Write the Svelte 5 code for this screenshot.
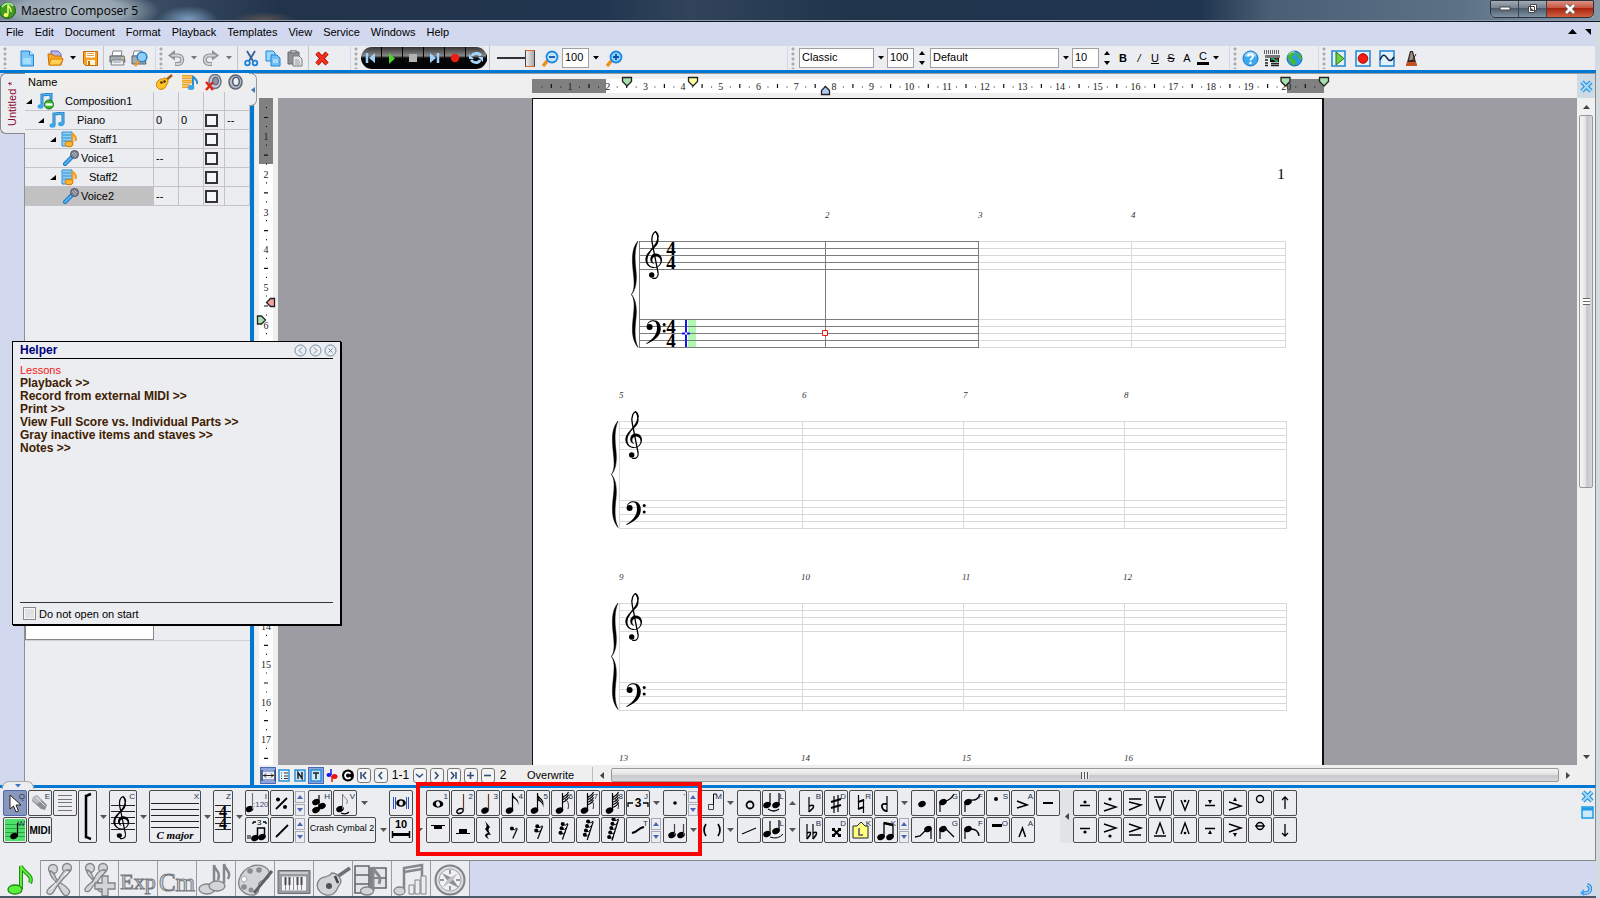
<script>
  const menus = ['File', 'Edit', 'Document', 'Format', 'Playback', 'Templates', 'View', 'Service', 'Windows', 'Help'];

  const rows = [
    { name: 'Composition1', depth: 0, icon: 'comp', open: true, a: '', b: '', box: false, d: '' },
    { name: 'Piano', depth: 1, icon: 'inst', open: true, a: '0', b: '0', box: true, d: '--' },
    { name: 'Staff1', depth: 2, icon: 'staff', open: true, a: '', b: '', box: true, d: '' },
    { name: 'Voice1', depth: 3, icon: 'mic', open: false, a: '--', b: '', box: true, d: '' },
    { name: 'Staff2', depth: 2, icon: 'staff', open: true, a: '', b: '', box: true, d: '' },
    { name: 'Voice2', depth: 3, icon: 'mic', open: false, a: '--', b: '', box: true, d: '', sel: true }
  ];

  const lessons = ['Playback >>', 'Record from external MIDI >>', 'Print >>', 'View Full Score vs. Individual Parts >>', 'Gray inactive items and staves >>', 'Notes >>'];

  let rulerHeight = $state(667);

  const noteBlue = '<path d="M5 13V2l9-1v11" fill="none" stroke="#1f7fc4" stroke-width="3"/><path d="M5 13V2l9-1v11" fill="none" stroke="#5cc0f5" stroke-width="1"/><ellipse cx="3.5" cy="13.5" rx="3" ry="2.2" fill="#3da4e6"/><ellipse cx="12" cy="12" rx="3" ry="2.2" fill="#3da4e6"/>';
  const small = {
    comp: noteBlue + '<circle cx="12" cy="11.500" r="4.500" fill="#3cb42c" stroke="#1d6e12"/><path d="M8.500 11.500h7" stroke="#f0fff0" stroke-width="2.500"/>',
    inst: noteBlue,
    staff: '<path d="M1 1h10v14H1z" fill="#8fd0f8" stroke="#2b8ed0"/><path d="M2 4h8M2 7h8M2 10h8" stroke="#2b8ed0"/><path d="M11.500 12V2c1 3 5 3 3 8" fill="none" stroke="#f39a1c" stroke-width="2"/><ellipse cx="8" cy="13" rx="4" ry="2.800" fill="#ffb52e" stroke="#d77b07"/>',
    mic: '<path d="M2 14l7-7" stroke="#1c72c0" stroke-width="4" stroke-linecap="round"/><path d="M2 14l7-7" stroke="#54b8f6" stroke-width="2" stroke-linecap="round"/><circle cx="11.500" cy="4.500" r="4" fill="#7d8494" stroke="#4d5362"/><path d="M9 3l4 4M11 2l3 3" stroke="#b8bdc8" stroke-width="1"/>',
    guitar: '<path d="M8 8L16 1" stroke="#9a5a18" stroke-width="2.500"/><path d="M2 7c2-3 5-1 6-3 4 0 5 4 3 6-1 1-1 4-4 5-5 2-9-4-5-8z" fill="#ffc322" stroke="#c97c08"/><circle cx="5.500" cy="8.500" r="1.300" fill="#4a2b05"/><circle cx="8.500" cy="7.500" r="1.300" fill="#4a2b05"/>',
    sheet: '<path d="M1 3h11M1 7.500h11M1 12h8" stroke="#d98a0c" stroke-width="3.500"/><path d="M1 3h11M1 7.500h11M1 12h8" stroke="#ffc24a" stroke-width="2"/><path d="M12 13V2c1 3 5 3 4 8" fill="none" stroke="#2b8ed0" stroke-width="2"/><ellipse cx="10" cy="13.500" rx="3.300" ry="2.500" fill="#3da4e6"/>',
    muted: '<ellipse cx="10" cy="7.500" rx="6" ry="7" fill="#c8ccd6" stroke="#6c7488" stroke-width="1.500"/><ellipse cx="10.500" cy="7" rx="3" ry="4" fill="#8b92a3" stroke="#525a6c"/><path d="M1 8l7 8M8 8l-7 8" stroke="#e02618" stroke-width="2.500"/>',
    speaker: '<ellipse cx="8.500" cy="8" rx="6.500" ry="7" fill="#b4bac8" stroke="#5c647a" stroke-width="1.500"/><ellipse cx="9" cy="7.500" rx="3.300" ry="4.300" fill="#eceef2" stroke="#525a6c" stroke-width="1.500"/>',
    new: '<path d="M2 1h8.500l4 4v11H2z" fill="#7cc6f8" stroke="#1f86d4"/><path d="M10.500 1v4h4" fill="#d8effd" stroke="#1f86d4"/><path d="M4 8h8v6H4z" fill="#a8dcfb"/>',
    open: '<path d="M4 1h7l3 3v7H4z" fill="#b9b4ea" stroke="#6c66b8"/><path d="M1 4h4l2 2h6l3 3-2 6H2z" fill="#fba828" stroke="#c86c06"/><path d="M4 9h12l-3 6H2z" fill="#ffcf55" stroke="#d58208"/>',
    save: '<path d="M1.500 1.500h14v14h-12l-2-2z" fill="#f9a024" stroke="#c76b05"/><path d="M4 2h9v5.500H4z" fill="#fff"/><path d="M5 10h8v5H5z" fill="#fff6df"/><path d="M5 3.500h7M5 5.500h7" stroke="#e0a04a"/><path d="M6 11h2v4H6z" fill="#c76b05"/>',
    print: '<path d="M4 1h9l-1 5H3z" fill="#fff" stroke="#7d8188"/><path d="M1 6h14l1 6H1z" fill="#a6abb2" stroke="#5f646c"/><path d="M3 10h11l1 5H2z" fill="#f0f1f3" stroke="#7d8188"/><path d="M4 12h8" stroke="#8e939a"/><circle cx="14" cy="8" r="1" fill="#f2d44c"/>',
    preview: '<path d="M3 1h8l-1 5H2z" fill="#fff" stroke="#7d8188"/><path d="M1 6h13l1 8H1z" fill="#a6abb2" stroke="#5f646c"/><circle cx="11" cy="7" r="4.800" fill="#8ed0fa" stroke="#2a80c8" stroke-width="1.500"/><path d="M8 11l-4 5" stroke="#f2962a" stroke-width="2.500"/>',
    undo: '<path d="M3 5.500h7a4 4 0 0 1 0 8.500H7" fill="none" stroke="#8e9197" stroke-width="4"/><path d="M7 0L0 5.500l7 5z" fill="#8e9197"/><path d="M3.500 5.500H10a4 4 0 0 1 0 8.500H7.500" fill="none" stroke="#d4d6da" stroke-width="1.800"/>',
    redo: '<path d="M13 5.500H6a4 4 0 0 0 0 8.500h3" fill="none" stroke="#8e9197" stroke-width="4"/><path d="M9 0l7 5.500-7 5z" fill="#8e9197"/><path d="M12.500 5.500H6a4 4 0 0 0 0 8.500h2.500" fill="none" stroke="#d4d6da" stroke-width="1.800"/>',
    cut: '<path d="M4 1l6 10M12 1L6 11" stroke="#3b5f9a" stroke-width="1.800"/><circle cx="4.500" cy="13" r="2.300" fill="none" stroke="#1d82d8" stroke-width="1.800"/><circle cx="12" cy="13" r="2.300" fill="none" stroke="#1d82d8" stroke-width="1.800"/>',
    copy: '<path d="M1 1h7l2 2v8H1z" fill="#9ad6fb" stroke="#1f86d4"/><path d="M6 5h6l3 3v8H6z" fill="#6fc0f6" stroke="#1f86d4"/><path d="M8 10h5M8 12h5" stroke="#e6f5fe"/>',
    paste: '<path d="M1 2h11v12H1z" fill="#8f9094" stroke="#6a6b70"/><path d="M4 0h5v3H4z" fill="#c3c4c8" stroke="#6a6b70"/><path d="M6 6h6l3 3v7H6z" fill="#e3e4e7" stroke="#7a7b80"/><path d="M8 10h4M8 12h5M8 14h5" stroke="#9b9ca1"/>',
    del: '<path d="M3 3l10 11M13 3L3 14" stroke="#a80e04" stroke-width="4.500"/><path d="M3 3l10 11M13 3L3 14" stroke="#f2301c" stroke-width="3"/>',
    zoomout: '<path d="M1 16l5-6" stroke="#ef8e20" stroke-width="3.500"/><circle cx="10" cy="7" r="5.500" fill="#bfe6fd" stroke="#1f86e0" stroke-width="1.800"/><path d="M7 7h6" stroke="#0c50b0" stroke-width="1.800"/>',
    zoomin: '<path d="M1 16l5-6" stroke="#ef8e20" stroke-width="3.500"/><circle cx="10" cy="7" r="5.500" fill="#8fd4fb" stroke="#1f86e0" stroke-width="1.800"/><path d="M7 7h6M10 4v6" stroke="#0c50b0" stroke-width="1.800"/>',
    help: '<circle cx="8.500" cy="8.500" r="7.500" fill="#3ba9f2" stroke="#1673c4"/><path d="M2.500 6.500a6.200 6.200 0 0 1 12 0z" fill="#9dd8fb"/><path d="M6 6.500c0-3 5-3 5 0 0 2-2.500 2-2.500 4" fill="none" stroke="#fff" stroke-width="1.800"/><circle cx="8.500" cy="13" r="1.200" fill="#fff"/>',
    keys: '<path d="M0 1h16M0 3h16" stroke="#333" stroke-width="1.500" stroke-dasharray="1 1"/><path d="M1 5h15v3H1z" fill="#777"/><path d="M6 8h9v4H6z" fill="#111"/><path d="M7 9l3 0 2 2 2 0" stroke="#25c06a" stroke-width="1.500" fill="none"/><path d="M1 10h3M1 13h3M1 15.500h3M7 13.500h8M7 15.500h8" stroke="#222" stroke-width="1.300"/><path d="M12 9h2" stroke="#e33"/>',
    globe: '<circle cx="8.500" cy="8.500" r="7.500" fill="#2a9be8" stroke="#1a64a8"/><path d="M3 3.500c3-3 6-2 6 0s-3 2-3 4 3 1 4 3-1 4-2 5c-3-1-3-4-5-6s-2-4 0-6z" fill="#46b53a"/><path d="M11 2.500c3 1 5 4 5 7-2 0-5-2-5-4z" fill="#46b53a"/><path d="M3 4.500c2-3 5-3 6-2" stroke="#c8f0ff" fill="none"/>',
    wplay: '<path d="M1 1h13v15H1z" fill="#e2f2fd" stroke="#1f86d4" stroke-width="1.500"/><path d="M5 2l8 6.500L5 15z" fill="#6cd040" stroke="#23760d"/>',
    wrec: '<path d="M1 1h14v15H1z" fill="#e2f2fd" stroke="#1f86d4" stroke-width="1.500"/><circle cx="8" cy="8.500" r="4.800" fill="#f21c10" stroke="#a80c04"/>',
    wwave: '<path d="M1 1h14v15H1z" fill="#e2f2fd" stroke="#1f86d4" stroke-width="1.500"/><path d="M1 10c3-7 5-5 7-2s4 4 7-1" fill="none" stroke="#13233c" stroke-width="1.500"/>',
    metro: '<path d="M7 1h3l4 15H3z" fill="#3d2a28"/><path d="M8 2h1l2 8H6z" fill="#9a8f8a"/><path d="M4 12h9l1 4H3z" fill="#c3521e"/><path d="M9 11l4-7" stroke="#222"/>'
  };

  const transport = [
    { n: 'Rewind', d: '<path d="M4 3v10" stroke="#9fd0fb" stroke-width="2.500"/><path d="M12 3v10L6 8z" fill="#9fd0fb"/>' },
    { n: 'Play', d: '<path d="M5 3l6 5.500L5 14z" fill="#4fd02a"/>' },
    { n: 'Stop', d: '<path d="M4 4h8v8H4z" fill="#b3b3b3"/>' },
    { n: 'Forward', d: '<path d="M12 3v10" stroke="#9fd0fb" stroke-width="2.500"/><path d="M4 3v10l6-5z" fill="#9fd0fb"/>' },
    { n: 'Record', d: '<circle cx="8" cy="8" r="4.200" fill="#f01c10"/>' },
    { n: 'Loop', d: '<path d="M13 5.500C10 2 5 3 4 6M3 10c3 4 8 3 9 0" fill="none" stroke="#a6d4fb" stroke-width="2.800"/><path d="M1 4v5h5zM15 12V7h-5z" fill="#a6d4fb"/>' }
  ];

  const head = (x, y) => `<ellipse cx="${x}" cy="${y}" rx="3.900" ry="3" transform="rotate(-25 ${x} ${y})"/>`;
  const stem = (x, y1, y2, c = '#000') => `<path d="M${x} ${y1}V${y2}" stroke="${c}" stroke-width="1.200" fill="none"/>`;
  const flagged = (n) => {
    let s = head(8.5, 20.5) + stem(11.5, 20, 3);
    for (let i = 0; i < n; i++) {
      const y = 3 + i * 2.6;
      s += n < 3
        ? `<path d="M11.5 ${y}c0 5 8 5 5.500 13c1-5-4-8-5.500-8z" />`
        : `<path d="M11.5 ${y + 4}q4-1 6-5" stroke="#000" stroke-width="1.100" fill="none"/>`;
    }
    if (n > 2) s += '<path d="M12 7c3 3 7 5 5 12" stroke="#333" fill="none"/>';
    return s;
  };
  const rest = (n) => {
    const top = 11.5 - (n - 1) * 2.3;
    let s = `<path d="M${16 + n * 0.3} ${top}L${12 - n * 0.2} ${21 + n * 0.5}" stroke="#000" stroke-width="1.200" fill="none"/>`;
    for (let i = 0; i < n; i++) {
      const y = top + i * 4.4;
      const x = 10.5 + n * 0.4 - i * 1.1;
      s += `<circle cx="${x}" cy="${y}" r="2"/><path d="M${x} ${y + 1}q3 1 5-1.500" stroke="#000" fill="none"/>`;
    }
    return s;
  };
  const line = (d, w = 1.3) => `<path d="${d}" fill="none" stroke="#000" stroke-width="${w}"/>`;
  const spot = (x, y, r = 1.6) => `<circle cx="${x}" cy="${y}" r="${r}"/>`;
  const two = head(5, 15) + head(14, 15) + stem(8, 15, 3) + stem(17, 15, 3);

  const g = {
    arrow: '<path d="M7 5v14l3.500-3 2.500 6 2.500-1-2.500-6h5z" fill="#fff" stroke="#222"/>',
    eraser: '<path d="M5 7l4-2 10 10-2 5-4-1L4 11z" fill="#8d8f94"/><path d="M5 7l4-2 5 5-5 4-5-4z" fill="#b9bbc0"/><path d="M8 7l9 9" stroke="#e8e8ea"/>',
    lines: '<path d="M5 5.500h14M5 9.500h14M5 12.500h14M5 16.500h14M5 20.500h14" stroke="#777" fill="none"/>',
    pen: '<path d="M2 2h20v22H2z" fill="#4fe06a"/><path d="M2 7.500h20M2 11.500h20M2 15.500h20M2 19.500h20" stroke="#2aa545"/>' + head(11, 19) + stem(14.5, 19, 6),
    tempo: head(4.5, 19) + stem(7.5, 19, 3, '#777') + '<text x="8" y="17" font-size="8" fill="#3a4a70">:120</text>',
    swing: line('M8 5h3M18 5h3M8 5v2M21 5v2') + '<text x="12" y="8" font-size="8">3</text>' + head(10, 21) + head(17, 20) + line('M12.500 21V11h7v9', 1.5) + line('M2 19h4M2 21h4', 1),
    repeat: line('M6 19L17 8', 1.8) + spot(8, 9.5, 2) + spot(15, 17, 2),
    slash: line('M6 20L18 8', 1.8),
    chord: head(8, 12) + head(14, 16) + head(8, 20) + stem(11, 20, 5),
    grace: head(7, 19) + '<path d="M9.500 19V4c1 4 7 5 4 10" fill="none" stroke="#777"/>' + line('M8 23q5 2 8-1'),
    breve: '<path d="M4.500 7v12M6.500 7v12M17.500 7v12M19.500 7v12" stroke="#2b50c8" fill="none"/><ellipse cx="12" cy="13" rx="4.800" ry="3.800"/><ellipse cx="12" cy="13" rx="2" ry="2.500" fill="#ebedf1"/>',
    ten: '<text x="12" y="11" font-size="11" font-weight="bold" text-anchor="middle">10</text><path d="M3.500 14v7M20.500 14v7" stroke="#000" stroke-width="1.500" fill="none"/><path d="M3 16h18v3H3z"/>',
    whole: '<ellipse cx="12" cy="14" rx="5.300" ry="3.700"/><ellipse cx="12" cy="14" rx="2" ry="2.700" fill="#ebedf1" transform="rotate(-20 12 14)"/>',
    half: '<ellipse cx="9" cy="21" rx="3.300" ry="2.200" fill="none" stroke="#000" stroke-width="1.400" transform="rotate(-25 9 21)"/>' + stem(12.5, 20, 4, '#6b3d1e'),
    quarter: head(9, 20.5) + stem(12.5, 20, 4, '#6b3d1e'),
    wrest: line('M5 8.500h14', 1.2) + '<path d="M8 8h8v4H8z"/>',
    hrest: line('M5 16.500h14', 1.2) + '<path d="M8 12h8v4H8z"/>',
    qrest: '<path d="M9 4l5 6c-2 2-2 4 1 8-4-1-5 1-2 4-5-2-5-5-1-6l-3-4c2-2 2-4 0-8z"/>',
    tuplet: line('M2 17v-4h5M17 13h5v4') + '<text x="12" y="17" font-size="12" text-anchor="middle" font-weight="bold">3</text>',
    tie: line('M6 16l3-1 6-4 3-1', 2),
    dot: spot(12, 13, 1.8),
    pair: head(9, 18) + head(18, 18) + stem(11.5, 18, 7, '#444') + stem(20.5, 18, 7, '#444'),
    sq: '<path d="M8.500 14.500h5v5h-5z" fill="none" stroke="#444"/>' + line('M13.500 15V4h3', 1),
    paren: '<path d="M6 7q-4 6 0 12M18 7q4 6 0 12" stroke="#000" stroke-width="1.700" fill="none"/>',
    circle: '<circle cx="13" cy="15" r="3.500" fill="none" stroke="#000" stroke-width="1.800"/>',
    gliss: line('M5 17l14-6', 1.1),
    slurs: two + line('M6 19q6 4 11 0'),
    slurs2: head(5, 17) + head(14, 14) + stem(8, 17, 4) + stem(17, 14, 3) + line('M8 20q8 3 13-3', 1),
    flat: line('M10 7v15', 1.2) + line('M10 16q6-2 4 2l-4 4', 1.6),
    dflat: line('M8 7v15M14 7v15', 1.2) + line('M8 16q5-2 3 2l-3 4M14 16q5-2 3 2l-3 4', 1.6),
    sharp: line('M10 6v17M14 5v17', 1.2) + line('M7 12l10-3M7 18l10-3', 2.2),
    dsharp: line('M9 12l7 7M16 12l-7 7', 2) + '<path d="M8 11h3v3H8zM14 11h3v3h-3zM8 17h3v3H8zM14 17h3v3h-3z"/>',
    natural: line('M9.500 5v14M14.500 9v14', 1.2) + line('M9 12l6-2M9 19l6-2', 2.2),
    cautious: '<path d="M4 9h4l4-4 4 4h3v12H4z" fill="#ffff80" stroke="#222"/><path d="M10 11v7h4" stroke="#555" stroke-width="1.500" fill="none"/>',
    backflat: line('M13 6v16', 1.2) + line('M13 14q-6-1-5 3t5 4', 1.8),
    beam: head(7, 20) + head(16, 20) + line('M10 20V6l9 2v12') + line('M10 6l9 2', 2.5),
    nhead: head(11, 14),
    up: head(7, 12) + stem(4, 22, 12) + line('M9 11q6-1 9-7'),
    up2: head(7, 12) + stem(4, 22, 12) + line('M10 10q7 1 9-6'),
    into: head(17, 12) + stem(20, 22, 12) + line('M4 20l5-1 6-6'),
    down: head(7, 12) + stem(4, 22, 12) + line('M10 12l8 8'),
    down2: head(7, 12) + stem(4, 22, 12) + line('M10 12q7 0 8 7'),
    stac: spot(10, 9, 2),
    bar: '<path d="M6 7h10v3H6z"/>',
    accent: line('M6 11l10 4-10 3', 1.6),
    marcato: line('M8 20l3.500-9 3 9', 1.5),
    ten1: line('M7 13h10', 1.8),
    a1: line('M7 15.500h10', 1.5) + spot(12, 12), b1: line('M7 11.500h10', 1.5) + spot(12, 15),
    a2: line('M6 13l12 4-12 4', 1.4) + spot(12, 9), b2: line('M6 7l12 4-12 4', 1.4) + spot(12, 19),
    a3: line('M6 9h12M6 12l12 3-12 5', 1.4), b3: line('M6 7l12 4-12 4M6 18h12', 1.4),
    a4: line('M6 7h12M8 9l4 11 4-11', 1.4), b4: line('M8 17l4-11 4 11M6 19h12', 1.4),
    a5: line('M8 10l4 10 4-10', 1.4) + spot(12, 11, 1.3), b5: line('M8 17l4-11 4 11', 1.4) + spot(12, 16, 1.3),
    a6: line('M7 15.500h10', 1.5) + '<path d="M10 10h4l-2 4z"/>', b6: line('M7 11.500h10', 1.5) + '<path d="M10 17h4l-2-4z"/>',
    a7: line('M6 12l12 4-12 4', 1.4) + '<path d="M10 11h4l-2-4z"/>', b7: line('M6 7l12 4-12 4', 1.4) + '<path d="M10 16h4l-2 4z"/>',
    a8: '<circle cx="12" cy="9" r="3.500" fill="none" stroke="#000" stroke-width="1.400"/>',
    b8: '<circle cx="12" cy="9" r="3.500" fill="none" stroke="#000" stroke-width="1.400"/>' + line('M7 9h10'),
    a9: line('M12 19V7M9 10l3-3 3 3', 1.3), b9: line('M12 7v12M9 16l3 3 3-3', 1.3)
  };
  for (let n = 1; n <= 5; n++) {
    g['f' + n] = flagged(n);
    g['r' + n] = rest(n);
  }

  // Buttons run down each column of two rows; "icon:key" gives the shortcut badge.
  const cells = (s) => s.split(' ').map((t) => { const [i, k = ''] = t.split(':'); return { i, k }; });
  const palette = [
    { t: 'grid', c: cells('breve ten') },
    { t: 'side', a: '', b: 'down' },
    { t: 'grid', c: cells('whole:1 wrest half:2 hrest quarter:3 qrest f1:4 r1 f2:5 r2 f3:6 r3 f4:7 r4 f5:8 r5 tuplet:J tie:T') },
    { t: 'side', a: 'down', b: 'spin' },
    { t: 'grid', c: cells("dot:' pair") },
    { t: 'side', a: 'spin', b: 'down' },
    { t: 'grid', c: cells('sq:M paren') },
    { t: 'side', a: 'down', b: 'down' },
    { t: 'grid', c: cells('circle gliss slurs:L slurs2:L') },
    { t: 'side', a: 'up', b: 'down' },
    { t: 'grid', c: cells('flat:B dflat:B sharp:D dsharp:D natural:R cautious:K backflat beam:K') },
    { t: 'side', a: 'down', b: 'spin' },
    { t: 'grid', c: cells('nhead into up:G down:G up2:F down2:F stac:S bar:O accent:A marcato:A ten1') },
    { t: 'mid' },
    { t: 'grid', c: cells('a1 b1 a2 b2 a3 b3 a4 b4 a5 b5 a6 b6 a7 b7 a8 b8 a9 b9') }
  ];

  const step = 37.7;
  const hx = (n) => 532.3 + n * step;
  const vy = (n) => 98.5 + n * step;
  const range = (a, b) => Array.from({ length: b - a + 1 }, (_, i) => a + i);
  const lastMark = $derived(Math.max(1, Math.floor((rulerHeight - 6) / step)));

  const systems = [
    { x: 639, top: 241, low: 319, end: 1285, live: 978, bars: [825, 978, 1131], nums: [[825, '2'], [978, '3'], [1131, '4']], ny: 218, time: true },
    { x: 619, top: 421, low: 500, end: 1286, bars: [802, 963, 1124], nums: [[619, '5'], [802, '6'], [963, '7'], [1124, '8']], ny: 398 },
    { x: 619, top: 603, low: 682, end: 1286, bars: [802, 963, 1124], nums: [[619, '9'], [801, '10'], [962, '11'], [1123, '12']], ny: 580 }
  ];
  const five = [0, 7, 14, 21, 28];

  const nav = [['First', 'M4 3v7M9 3L6 6.500 9 10'], ['Previous', 'M8 3L5 6.500 8 10']];
  const nav2 = [['List', 'M3 5l3.500 3L10 5'], ['Next', 'M5 3l3 3.500L5 10'], ['Last', 'M4 3l3 3.500L4 10M9 3v7'], ['Add', 'M3 6.500h7M6.500 3v7'], ['Remove', 'M3 6.500h7']];

  const gray = 'fill="#d3d4d6" stroke="#808388" stroke-width="1.300"';
  const tabs = [
    { n: 'Bones', d: `<circle cx="12" cy="7" r="4.500" ${gray}/><circle cx="26" cy="6" r="4.500" ${gray}/><path d="M9 9c5 1 4 5 7 9s8 4 12 10c2 3-2 7-5 5-4-4-5-9-8-13S8 14 9 9z" ${gray}/><path d="M29 8c-1 5-4 5-7 9s-6 6-9 12c-2 5-8 4-7 0 2-5 8-6 11-11s5-9 8-10z" ${gray}/><path d="M10 27l5-6M23 13l4-3" stroke="#fff"/>` },
    { n: 'Add bones', d: `<circle cx="10" cy="6" r="4.500" ${gray}/><circle cx="23" cy="6" r="4.500" ${gray}/><path d="M7 8c5 1 4 5 7 9s7 3 10 8c2 3-2 6-5 4-4-3-4-8-6-11S6 13 7 8z" ${gray}/><path d="M26 8c-1 5-4 4-6 8s-6 6-9 11c-2 4-7 3-6 0 2-5 7-5 9-10s5-8 8-9z" ${gray}/><path d="M22 14h6v7h7v6h-7v7h-6v-7h-7v-6h7z" ${gray}/>` },
    { n: 'Expression', d: '<text x="19" y="27" font-family="Liberation Serif" font-size="22" text-anchor="middle" fill="#dcdde0" stroke="#777a80">Exp</text>' },
    { n: 'Chords', d: '<text x="19" y="29" font-family="Liberation Serif" font-size="25" text-anchor="middle" fill="#dcdde0" stroke="#777a80">Cm</text>' },
    { n: 'Notes', d: `<path d="M17 25V3c1 6 7 6 4 15" fill="none" stroke="#84878c" stroke-width="2.500"/><path d="M27 21V2c1 6 8 8 4 15" fill="none" stroke="#84878c" stroke-width="2.500"/><ellipse cx="10" cy="27" rx="8" ry="5" ${gray}/><ellipse cx="20" cy="24" rx="8" ry="5" ${gray}/>` },
    { n: 'Colors', d: `<path d="M16 4c11-3 19 3 17 10-1 5-8 3-10 7-1 4 2 10-5 12C9 34 1 27 3 18c1-6 7-12 13-14z" ${gray}/><circle cx="8" cy="17" r="2.800" fill="#fff" stroke="#aaa"/><circle cx="14" cy="9" r="2.800" fill="#8a8d92"/><circle cx="23" cy="8" r="2.800" fill="#8a8d92"/><circle cx="8" cy="25" r="2.800" fill="#8a8d92"/><circle cx="15" cy="28" r="2.500" fill="#8a8d92"/><path d="M36 9L18 31" stroke="#5e6166" stroke-width="3"/>` },
    { n: 'Keyboard', d: '<path d="M3 8.500h32v23H3z" fill="#96999e" stroke="#6b6e73"/><path d="M5 11h28" stroke="#c9cbce" stroke-width="2"/><path d="M7 14.500h24v14H7z" fill="#f4f4f6"/><path d="M10.500 15v13M14.500 15v13M18.500 15v13M22.500 15v13M26.500 15v13" stroke="#85888d"/><path d="M10.500 15v8M14.500 15v8M22.500 15v8M26.500 15v8" stroke="#4a4d52" stroke-width="2"/>' },
    { n: 'Guitar', d: `<path d="M20 17L36 6" stroke="#6d7075" stroke-width="3.500"/><path d="M6 17c5-4 7 0 12-6 5 0 11 6 8 11-3 3-2 7-7 10C9 37-2 25 6 17z" ${gray}/><circle cx="15" cy="24" r="3" fill="#4f5257"/><path d="M21 14l3 7" stroke="#3f4247" stroke-width="2.500"/>` },
    { n: 'Library', d: `<path d="M2 4h14v9H2zM2 13h14v9H2zM2 22h14v9H2zM18 6h15v10H18zM18 16h15v10H18z" fill="#e4e5e8" stroke="#63666b" stroke-width="1.600"/><path d="M20 29V5c1 6 10 8 6 17" fill="none" stroke="#85888d" stroke-width="3"/><ellipse cx="14" cy="29" rx="6.500" ry="4" ${gray}/>` },
    { n: 'Mixer', d: `<path d="M12 28V6l18-3v15" fill="none" stroke="#84878c" stroke-width="2.500"/><path d="M12 10l18-3" stroke="#84878c" stroke-width="2.500"/><ellipse cx="7.500" cy="29" rx="5.500" ry="4" ${gray}/><path d="M17 23h5v9h-5zM23 18h5v14h-5zM29 14h5v18h-5z" fill="#eceded" stroke="#808388"/>` },
    { n: 'Compass', d: '<circle cx="19" cy="18" r="14.500" fill="#dcdde0" stroke="#808388" stroke-width="2"/><circle cx="19" cy="18" r="11" fill="#f1f1f3" stroke="#a1a4a9"/><path d="M11 11l10 5 7 10-10-5z" fill="#8d9095"/><path d="M27 11l-6 8-10 7 6-9z" fill="#bfc1c4"/><path d="M19 8v4M19 24v4M9 18h4M25 18h4" stroke="#77797e" stroke-width="1.500"/>' }
  ];
</script>

{#snippet ic(name)}
  <svg class="ic" width="17" height="17" viewBox="0 0 17 17" aria-hidden="true">{@html small[name]}</svg>
{/snippet}

{#snippet tool(name)}
  <button class="tool" aria-label={name}>{@render ic(name)}</button>
{/snippet}

{#snippet caret(dim)}
  <button class="caret" class:dim aria-label="Options"><svg width="6" height="4" viewBox="0 0 6 4"><path d="M0 0h6L3 3.500z" fill="currentColor" /></svg></button>
{/snippet}

{#snippet spin()}
  <span class="spin">
    <button aria-label="Increase"><svg width="6" height="4" viewBox="0 0 6 4"><path d="M0 4h6L3 0z" fill="currentColor" /></svg></button>
    <button aria-label="Decrease"><svg width="6" height="4" viewBox="0 0 6 4"><path d="M0 0h6L3 4z" fill="currentColor" /></svg></button>
  </span>
{/snippet}

{#snippet pb(i, k, cls)}
  <button class="pb {cls}" aria-label={i}>
    <svg width="24" height="26" viewBox="0 0 24 26" aria-hidden="true">{@html g[i]}</svg>
    {#if k}<span class="key">{k}</span>{/if}
  </button>
{/snippet}

{#snippet side(kind)}
  {#if kind === 'spin'}
    <span class="pspin">{@render spin()}</span>
  {:else if kind}
    <button class="arrow" aria-label="More"><svg width="7" height="4" viewBox="0 0 7 4"><path d={kind === 'up' ? 'M0 4h7L3.500 0z' : 'M0 0h7L3.500 4z'} fill="#555" /></svg></button>
  {:else}
    <span></span>
  {/if}
{/snippet}

{#snippet treble()}
  <path d="M13.200 42.500L7.200 12C6 5 8.500 1.500 10.500.600c1.500 1 2.800 3 2.700 6" fill="none" stroke="#000" stroke-width="1.300" />
  <path d="M10.500.600c3 3 4.500 9 1.500 13.500C9 18 6 19.500 4.500 23 2.500 25.500 2.500 28 2.500 29.500 2.500 33 5 36 9 36v1C5 37 1.500 34.500.500 30 0 27 1 23.500 5 19.500 8 15.500 13 11 12 5z" />
  <path d="M5.300 28.500c0-4 2.700-6 5.700-5.900 4 .200 6.300 3.400 6 6.900C16.700 34 13 37 9 37v-.800c3.500 0 6.500-2.700 6.500-6.200 0-3-2-4.200-4.300-4.400-2.200-.100-3.900 1.400-3.900 3.400 0 2 1 3 2.200 4-2.500-.500-4.200-2-4.200-4.500z" />
  <path d="M13.200 42.500c.300 4-3 5.500-6 4.600" fill="none" stroke="#000" stroke-width="1.200" />
  <circle cx="6.700" cy="44" r="2.700" />
{/snippet}

{#snippet bass()}
  <path d="M.800 6C1.200 2 4 .200 7.500.200c4.500 0 7.300 3.300 7.300 8.300C14.800 16 8 21 .500 24l-.300-.700C6 20 11 15 11 8c0-4-1-6.800-4-6.800-2.500 0-4.500 1.300-5.500 3.800z" />
  <circle cx="3.600" cy="6.900" r="3" />
  <circle cx="18.200" cy="4.500" r="1.500" />
  <circle cx="18.200" cy="11" r="1.500" />
{/snippet}

<div class="window">
  <header class="title">
    <svg class="logo" width="16" height="17" viewBox="0 0 16 17" aria-hidden="true"><circle cx="7.500" cy="8.500" r="8" fill="#3f9a22" stroke="#1e5a10" /><path d="M2 5c3-5 9-4 11-1" stroke="#a4e48a" stroke-width="2" fill="none" /><path d="M8 12V3c1 3 4 3 3 7" fill="none" stroke="#f5ff70" stroke-width="1.500" /><ellipse cx="6" cy="13" rx="2.500" ry="2" fill="#f5ff70" /></svg>
    <h1>Maestro Composer 5</h1>
    <div class="winbtns">
      <button aria-label="Minimize"><svg width="12" height="5" viewBox="0 0 12 5"><path d="M1 1h10v3H1z" fill="#fff" stroke="#444" /></svg></button>
      <button aria-label="Restore"><svg width="11" height="11" viewBox="0 0 11 11"><path d="M3.500 1.500h6v6h-6zM1.500 3.500h6v6h-6z" fill="#fff" stroke="#444" /><path d="M3.500 5.500h2v2h-2z" fill="#444" /></svg></button>
      <button class="x" aria-label="Close"><svg width="12" height="10" viewBox="0 0 12 10"><path d="M2 1l8 8M10 1L2 9" stroke="#555" stroke-width="4" /><path d="M2 1l8 8M10 1L2 9" stroke="#fff" stroke-width="2.500" /></svg></button>
    </div>
  </header>

  <nav class="menu">
    {#each menus as m}<button>{m}</button>{/each}
    <svg class="menuend" width="24" height="8" viewBox="0 0 24 8" aria-hidden="true"><path d="M0 6h9L4.500 1zM17 1h6v6z" /></svg>
  </nav>

  <div class="toolbar">
    <div class="tg g1">
      <i class="grip"></i>
      {@render tool('new')}<i class="s6"></i>{@render tool('open')}{@render caret(false)}{@render tool('save')}<i class="sep"></i>{@render tool('print')}{@render tool('preview')}
    </div>
    <div class="tg g2">
      <i class="grip"></i>
      {@render tool('undo')}{@render caret(true)}{@render tool('redo')}{@render caret(true)}<i class="sep"></i>{@render tool('cut')}{@render tool('copy')}{@render tool('paste')}<i class="sep"></i>{@render tool('del')}
    </div>
    <div class="tg g3">
      <i class="grip"></i>
      <div class="transport">
        {#each transport as t}
          <button aria-label={t.n}><svg width="16" height="16" viewBox="0 0 16 16">{@html t.d}</svg></button>
        {/each}
      </div>
      <i class="sep"></i>
      <input class="slider" type="range" min="0" max="100" value="100" aria-label="Volume" />
      {@render tool('zoomout')}
      <input class="f27" type="text" value="100" aria-label="Zoom" />
      {@render caret(false)}
      {@render tool('zoomin')}
    </div>
    <div class="tg g4">
      <i class="grip"></i>
      <select class="f74" aria-label="Style"><option>Classic</option></select>
      {@render caret(false)}
      <input class="f27" type="text" value="100" aria-label="Scale" />
      {@render spin()}
      <select class="f129" aria-label="Font"><option>Default</option></select>
      {@render caret(false)}
      <input class="f27" type="text" value="10" aria-label="Font size" />
      {@render spin()}
      <div class="fmt">
        <button><b>B</b></button><button><em>/</em></button><button><u>U</u></button><button><s>S</s></button><button>A</button><button class="col">C</button>
      </div>
      {@render caret(false)}
    </div>
    <div class="tg g5"><i class="grip"></i>{@render tool('help')}{@render tool('keys')}{@render tool('globe')}</div>
    <div class="tg g6"><i class="grip"></i>{@render tool('wplay')}{@render tool('wrec')}{@render tool('wwave')}{@render tool('metro')}</div>
  </div>

  <main>
    <div class="strip"><button class="doc">Untitled *</button></div>
    <section class="tree">
      <table>
        <thead>
          <tr>
            <th class="c1">Name</th>
            <th>{@render ic('guitar')}</th><th>{@render ic('sheet')}</th><th class="c4">{@render ic('muted')}</th><th>{@render ic('speaker')}</th>
          </tr>
        </thead>
        <tbody>
          {#each rows as r}
            <tr>
              <td class="c1" class:sel={r.sel}>
                <div class="node d{r.depth}">
                  <svg class="tw" width="7" height="7" viewBox="0 0 7 7" aria-hidden="true">{#if r.open}<path d="M6 1v5H0z" />{/if}</svg>
                  {@render ic(r.icon)}
                  <span>{r.name}</span>
                </div>
              </td>
              <td>{r.a}</td>
              <td>{r.b}</td>
              <td class="c4">{#if r.box}<input type="checkbox" aria-label="Mute {r.name}" />{/if}</td>
              <td>{r.d}</td>
            </tr>
          {/each}
        </tbody>
      </table>
      <div class="lower"><div class="cell"></div></div>
    </section>
    <div class="split"><button aria-label="Collapse panel"><svg width="4" height="6" viewBox="0 0 4 6"><path d="M4 0v6L0 3z" fill="#3a78b8" /></svg></button></div>

    <section class="editor">
      <div class="corner"></div>
      <div class="hruler">
        <svg width="792" height="24" viewBox="532 74 792 24" aria-hidden="true">
          <path d="M532 79h74v14h-74zM1287 79h37v14h-37z" fill="#808080" />
          <path d="M606 79h681v14H606z" fill="#fff" />
          {#each range(0, 20) as n}
            {#if n}<text x={hx(n)} y="90" text-anchor="middle">{n}</text>{/if}
            <path d="M{hx(n) + 9} 87h1M{hx(n) + 28} 87h1" stroke="#111" />
            <path d="M{hx(n) + 19} 84v4" stroke="#111" stroke-width="1.200" />
          {/each}
          <g stroke="#222" stroke-width="1.300">
            <path d="M622.500 77.500h9v4l-4.500 4.500-4.500-4.500z" fill="#a8dfae" />
            <path d="M688.500 77.500h9v4l-4.500 4.500-4.500-4.500z" fill="#ffffa0" />
            <path d="M821.500 94.500h8v-4l-4-4-4 4z" fill="#b4cdf5" />
            <path d="M1281 77.500h9v4l-4.500 4.500-4.500-4.500z" fill="#a8dfae" />
            <path d="M1319.500 77.500h9v4l-4.500 4.500-4.500-4.500z" fill="#a8dfae" />
          </g>
        </svg>
      </div>
      <button class="closebox" aria-label="Close document"><svg width="13" height="13" viewBox="0 0 13 13"><path d="M2 2l9 9M11 2l-9 9" stroke="#2a93dc" stroke-width="4.500" /><path d="M2 2l9 9M11 2l-9 9" stroke="#a6dafb" stroke-width="2" /></svg></button>

      <div class="vruler" bind:clientHeight={rulerHeight}>
        <svg width="23" height={rulerHeight} viewBox="255 98 23 {rulerHeight}" aria-hidden="true">
          <path d="M259 98h14v{rulerHeight}h-14z" fill="#fff" />
          <path d="M259 98h14v66h-14z" fill="#808080" />
          {#each range(0, lastMark) as n}
            {#if n}<text x="266" y={vy(n) + 4} text-anchor="middle">{n}</text>{/if}
            <path d="M266 {vy(n) + 9}h1M266 {vy(n) + 28}h1M264 {vy(n) + 19}h4" stroke="#111" stroke-width="1.200" />
          {/each}
          <g stroke="#222" stroke-width="1.300">
            <path d="M274.500 298.500v8h-4l-4-4 4-4z" fill="#f6a0a0" />
            <path d="M257.500 316v8h4l4-4-4-4z" fill="#a8dfae" />
          </g>
        </svg>
      </div>

      <div class="canvas">
        <div class="page">
          <svg width="790" height="666" viewBox="533 99 790 666" role="img" aria-label="Score page 1">
            <text class="pno" x="1281" y="179" text-anchor="middle">1</text>
            <path d="M688 320h8v27h-8z" fill="#b0f7b0" />
            {#each systems as s}
              {#each five as o}
                <path d="M{s.x} {s.top + o + 0.5}H{s.end}M{s.x} {s.low + o + 0.5}H{s.end}" stroke="#d8d8d8" fill="none" />
                {#if s.live}<path d="M{s.x} {s.top + o + 0.5}H{s.live}M{s.x} {s.low + o + 0.5}H{s.live}" stroke="#7c7c7c" fill="none" />{/if}
              {/each}
              {#each [s.x, ...s.bars, s.end] as b}
                <path d="M{b + 0.5} {s.top}V{s.low + 29}" stroke={s.live && b <= s.live ? '#7c7c7c' : '#d8d8d8'} fill="none" />
              {/each}
              {#each s.nums as [x, n]}<text class="mno" {x} y={s.ny}>{n}</text>{/each}
              <g transform="translate({s.x - 8} {s.top})">
                <path d="M7 0C3.500 8 3.500 18 5 30c1 10 0 18-4.500 23.500C5 59 6 67 5 77 3.500 90 3.500 99 7 106.500 0 98 1 87 2.500 74c1-10 1-16-2-20.500C3.500 49 3.500 43 2.500 33 1 20 0 8 7 0z" stroke="#000" stroke-width=".5" />
              </g>
              <g transform="translate({s.x + 6} {s.top - 10})">{@render treble()}</g>
              <g transform="translate({s.x + 7} {s.low + 1})">{@render bass()}</g>
              {#if s.time}
                {#each [s.top + 14, s.top + 28, s.low + 14, s.low + 28] as y}<text class="time" x="671" {y} text-anchor="middle">4</text>{/each}
              {/if}
            {/each}
            <path d="M686 320v27M682 333.500h8" stroke="#1414f0" stroke-width="2" />
            <path d="M685 332.500h2v2h-2z" fill="#fff" />
            <path d="M822.500 330.500h5v5h-5z" fill="#fff" stroke="#f01010" />
            <text class="mno" x="619" y="761">13</text><text class="mno" x="801" y="761">14</text><text class="mno" x="962" y="761">15</text><text class="mno" x="1124" y="761">16</text>
          </svg>
        </div>
      </div>

      <div class="vscroll">
        <button aria-label="Scroll up"><svg width="7" height="4" viewBox="0 0 7 4"><path d="M0 4h7L3.500 0z" fill="#444" /></svg></button>
        <div class="vtrack"><div class="vthumb"><i></i></div></div>
        <button aria-label="Scroll down"><svg width="7" height="4" viewBox="0 0 7 4"><path d="M0 0h7L3.500 4z" fill="#444" /></svg></button>
      </div>

      <div class="status">
        <div class="views">
          <button class="on" aria-label="Page width"><svg width="15" height="13" viewBox="0 0 15 13"><path d="M2 3h11v7H2z" fill="#e8ecf4" /><path d="M1 1v11M14 1v11M2 6.500h11M5 4.500L3 6.500l2 2M10 4.500l2 2-2 2" stroke="#222" fill="none" /></svg></button>
          <button aria-label="List"><svg width="12" height="13" viewBox="0 0 12 13"><path d="M1 1h10v11H1z" fill="#e8f5fe" stroke="#2a93dc" stroke-width="1.500" /><path d="M3 4h1M6 4h4M3 7h1M6 7h4M3 9.500h1M6 9.500h4" stroke="#333" /></svg></button>
          <button aria-label="Names"><svg width="12" height="13" viewBox="0 0 12 13"><path d="M1 1h10v11H1z" fill="#c9e8fc" stroke="#2a93dc" stroke-width="1.500" /><path d="M4 10V3.500l4 6V3" stroke="#222" stroke-width="1.500" fill="none" /></svg></button>
          <button class="on" aria-label="Text"><svg width="12" height="13" viewBox="0 0 12 13"><path d="M1 1h10v11H1z" fill="#c9e8fc" stroke="#2a93dc" stroke-width="1.500" /><path d="M3 4h6M6 4v6" stroke="#222" stroke-width="1.500" fill="none" /></svg></button>
          <button aria-label="Voice colors"><svg width="12" height="13" viewBox="0 0 12 13"><ellipse cx="3" cy="6" rx="2.500" ry="2" fill="#1414f0" /><path d="M5 6V0" stroke="#1414f0" stroke-width="1.500" /><ellipse cx="8.500" cy="7.500" rx="3" ry="2.500" fill="#f01010" /><path d="M6 7v6" stroke="#f01010" stroke-width="1.500" /></svg></button>
          <button aria-label="Concert pitch"><svg width="12" height="13" viewBox="0 0 12 13"><circle cx="6" cy="6.500" r="6" /><path d="M8.500 4.800a3 3 0 1 0 0 3.400" stroke="#fff" stroke-width="1.800" fill="none" /></svg></button>
        </div>
        <div class="nav">
          {#each nav as [n, d]}<button aria-label={n}><svg width="13" height="13" viewBox="0 0 13 13"><path {d} /></svg></button>{/each}
        </div>
        <span class="pages">1-1</span>
        <div class="nav">
          {#each nav2 as [n, d]}<button aria-label={n}><svg width="13" height="13" viewBox="0 0 13 13"><path {d} /></svg></button>{/each}
        </div>
        <span class="count">2</span>
        <span class="mode">Overwrite</span>
        <div class="hscroll">
          <button aria-label="Scroll left"><svg width="4" height="7" viewBox="0 0 4 7"><path d="M4 0v7L0 3.500z" fill="#444" /></svg></button>
          <div class="hthumb"><i></i></div>
          <button aria-label="Scroll right"><svg width="4" height="7" viewBox="0 0 4 7"><path d="M0 0v7l4-3.500z" fill="#444" /></svg></button>
        </div>
      </div>
    </section>
  </main>

  <footer>
    <button class="pull" aria-label="Collapse palette"><svg width="6" height="4" viewBox="0 0 6 4"><path d="M0 0h6L3 3.500z" fill="#3a78b8" /></svg></button>
    <div class="palette">
      <div class="grid">
        {@render pb('arrow', 'Q', 'on')}{@render pb('pen', 'W', '')}{@render pb('eraser', 'E', '')}
        <button class="pb midi">MIDI</button>
        {@render pb('lines', '', '')}
      </div>
      <button class="pb tall w19" aria-label="Bracket"><svg width="19" height="53" viewBox="0 0 19 53"><path d="M13 4c-3 1-4 2-5 2v41c1 0 2 1 5 2" stroke="#000" stroke-width="2.500" fill="none" /></svg></button>
      <div class="one">{@render side('down')}</div>
      <button class="pb tall w28" aria-label="Clef"><svg width="28" height="53" viewBox="0 0 28 53"><path d="M2 15.500h24M2 21.500h24M2 27.500h24M2 33.500h24M2 39.500h24" stroke="#222" /><g transform="translate(4 6) scale(.95 .9)">{@render treble()}</g></svg><span class="key">C</span></button>
      <div class="one">{@render side('down')}</div>
      <button class="pb tall w52" aria-label="Key"><svg width="52" height="53" viewBox="0 0 52 53"><path d="M2 13.500h48M2 19.500h48M2 25.500h48M2 31.500h48M2 37.500h48" stroke="#222" /></svg><span class="keyname">C major</span><span class="key">X</span></button>
      <div class="one">{@render side('down')}</div>
      <button class="pb tall w20" aria-label="Meter"><svg width="20" height="53" viewBox="0 0 20 53"><path d="M2 15.500h16M2 21.500h16M2 27.500h16M2 33.500h16M2 39.500h16" stroke="#222" /><text class="meter" x="10" y="27" text-anchor="middle">4</text><text class="meter" x="10" y="39" text-anchor="middle">4</text></svg><span class="key">Z</span></button>
      <div class="one">{@render side('down')}</div>
      <div class="grid">{@render pb('tempo', 'I', '')}{@render pb('swing', '', '')}{@render pb('repeat', '', '')}{@render pb('slash', '', '')}</div>
      <div class="two">{@render side('spin')}{@render side('spin')}</div>
      <div class="drums">
        <div class="row">{@render pb('chord', 'H', '')}{@render pb('grace', 'V', '')}{@render side('down')}</div>
        <div class="row"><button class="pb crash">Crash Cymbal 2</button>{@render side('down')}</div>
      </div>
      {#each palette as s}
        {#if s.t === 'grid'}
          <div class="grid">{#each s.c as c}{@render pb(c.i, c.k, '')}{/each}</div>
        {:else if s.t === 'side'}
          <div class="two">{@render side(s.a)}{@render side(s.b)}</div>
        {:else}
          <div class="one mid"><svg width="4" height="7" viewBox="0 0 4 7"><path d="M4 0v7L0 3.500z" fill="#444" /></svg></div>
        {/if}
      {/each}
      <div class="pclose">
        <button aria-label="Close palette"><svg width="13" height="13" viewBox="0 0 13 13"><path d="M2 2l9 9M11 2l-9 9" stroke="#2a93dc" stroke-width="4.500" /><path d="M2 2l9 9M11 2l-9 9" stroke="#a6dafb" stroke-width="2" /></svg></button>
        <button aria-label="Float palette"><svg width="13" height="13" viewBox="0 0 13 13"><path d="M1 1h11v11H1z" fill="#c9eafd" stroke="#1f9be8" stroke-width="1.500" /><path d="M1 3h11" stroke="#1f9be8" stroke-width="3" /></svg></button>
      </div>
    </div>
    <div class="frame"></div>
    <div class="tabs">
      <button class="tab active" aria-label="Main palette"><svg width="38" height="34" viewBox="0 0 38 34"><path d="M20 28V5c2 7 13 9 9 17" fill="none" stroke="#1f8a12" stroke-width="4" /><path d="M20 28V5c2 7 13 9 9 17" fill="none" stroke="#5cf03c" stroke-width="2" /><ellipse cx="14" cy="28.500" rx="7" ry="4.500" fill="#5cf03c" stroke="#1f8a12" stroke-width="1.300" /></svg></button>
      {#each tabs as t}
        <button class="tab" aria-label={t.n}><svg width="38" height="34" viewBox="0 0 38 34">{@html t.d}</svg></button>
      {/each}
      <button class="revert" aria-label="Restore palettes"><svg width="14" height="13" viewBox="0 0 14 13"><path d="M8 2c5 1 4 8-1 8H4" stroke="#1f86d4" stroke-width="3.500" fill="none" /><path d="M8 2c5 1 4 8-1 8H4" stroke="#a6dafb" stroke-width="1.500" fill="none" /><path d="M5 6L1 10l4 3z" fill="#3ba9f2" /></svg></button>
    </div>
  </footer>

  <aside class="helper">
    <header>
      <h2>Helper</h2>
      <div class="hb">
        <button aria-label="Back"><svg width="13" height="13" viewBox="0 0 13 13"><circle cx="6.500" cy="6.500" r="5.500" /><path d="M8 3.500l-3 3 3 3" /></svg></button>
        <button aria-label="Forward"><svg width="13" height="13" viewBox="0 0 13 13"><circle cx="6.500" cy="6.500" r="5.500" /><path d="M5 3.500l3 3-3 3" /></svg></button>
        <button aria-label="Close helper"><svg width="13" height="13" viewBox="0 0 13 13"><circle cx="6.500" cy="6.500" r="5.500" /><path d="M4.500 4.500l4 4M8.500 4.500l-4 4" /></svg></button>
      </div>
    </header>
    <div class="lessons">
      <p>Lessons</p>
      {#each lessons as l}<a href="#lesson">{l}</a>{/each}
    </div>
    <label><input type="checkbox" />Do not open on start</label>
  </aside>
</div>

<style>
  :global(body) { margin: 0; }
  :global(*) { box-sizing: border-box; }
  .window { position: relative; display: flex; flex-direction: column; height: 100vh; overflow: hidden; padding-right: 4px; background: #d5dade; font: 11px "Liberation Sans", Arial, sans-serif; color: #000; }
  button { margin: 0; padding: 0; border: 0; background: none; font: inherit; color: inherit; }
  svg { display: block; flex: none; }

  .title { display: flex; align-items: center; flex: none; height: 22px; margin-right: -4px; padding-right: 6px; border-bottom: 1px solid #0d1520; box-shadow: inset 0 -1px #8d9dac; background: radial-gradient(ellipse 90px 24px at 70px 11px, #aab6c0 0, #97a5b2 60%, transparent), radial-gradient(ellipse 30px 14px at 188px 20px, #7fa0c4, transparent), radial-gradient(ellipse 32px 8px at 264px 20px, #5d5350, transparent), linear-gradient(90deg, #5b6d80 0, #3a4d63 150px, #22344c 280px, #22354e 600px, #31445c 690px, #20344c 850px, #20364e 1200px, #4a5f76 1270px, #5d7186 1460px, #8397a6 100%); }
  .logo { margin-right: 5px; }
  h1 { flex: 1; margin: 0; font: 12px "Open Sans", "Noto Sans", sans-serif; line-height: 20px; }
  .winbtns { display: flex; align-self: flex-start; height: 18px; border: 1px solid #c8d2da; border-top: 0; border-radius: 0 0 5px 5px; overflow: hidden; outline: 1px solid #2a333d; outline-offset: -1px; }
  .winbtns button { display: grid; place-items: center; width: 28px; border-right: 1px solid #39444f; background: linear-gradient(#a8b2bc, #75828f 45%, #4d5c6c 50%, #8093a3); }
  .winbtns .x { width: 46px; border: 0; background: linear-gradient(#dc9a8c, #c75642 45%, #a82310 50%, #d06040); }

  .menu { display: flex; align-items: center; flex: none; gap: 11px; height: 25px; padding: 0 4px 5px 6px; background: #d2d8ee; }
  .menuend { margin-left: auto; }

  .toolbar { display: flex; flex: none; height: 27px; margin-top: -1px; border-bottom: 3px solid #0078d4; background: #d2d8ee; }
  .tg { display: flex; align-items: center; flex: none; height: 24px; padding-right: 1px; border-right: 1px solid #d2d8ee; background: #ebedf1; }
  .g1 { width: 156px; }
  .g2 { width: 195px; }
  .g3 { width: 437px; }
  .g4 { width: 442px; }
  .g5 { width: 89px; }
  .g6 { flex: 1; }
  .g1 .grip { margin-right: 9px; }
  .g1 .sep { margin: 0 2px; }
  .g2 .grip { margin-right: 2px; }
  .g6 .grip { margin-right: 2px; }
  .g6 .tool { margin-right: 2px; }
  .g5 .grip { margin-right: 2px; }
  .grip { flex: none; width: 4px; height: 22px; margin: 0 3px; background: radial-gradient(circle at 2px 2px, #aaa 1px, transparent 2px) 0 0 / 4px 5px; }
  .s6 { width: 6px; }
  .sep { flex: none; width: 1px; height: 24px; margin: 0 2px; background: #c2c4c8; }
  .tool { display: grid; place-items: center; flex: none; width: 22px; height: 22px; }
  .caret { display: grid; place-items: center; flex: none; width: 13px; height: 22px; }
  .dim { color: #777; }
  .transport { display: flex; flex: none; width: 126px; height: 22px; border-radius: 11px; overflow: hidden; background: linear-gradient(#333, #888 40%, #0a0a0a 50%, #000); }
  .transport button { display: grid; place-items: center; flex: 1; border-right: 1px solid #000; }
  .slider { appearance: none; flex: none; width: 38px; height: 18px; margin: 0 3px 0 5px; background: linear-gradient(#333, #333) center / 100% 2px no-repeat; }
  .slider::-webkit-slider-thumb { appearance: none; width: 10px; height: 17px; border: 1px solid #444; border-top: 1px solid #e06a20; border-bottom: 1px solid #e06a20; background: linear-gradient(90deg, #eee, #aaa); }
  .tg input[type='text'], select { appearance: none; flex: none; height: 20px; margin: 0; padding: 0 2px 2px; border: 1px solid #a0a0a0; border-radius: 0; outline: 0; background: #fff; font: inherit; color: #000; }
  .g3 .tool { margin: 0 1px; }
  .f27 { width: 27px; }
  .f74 { width: 75px; }
  .f129 { width: 129px; }
  .g4 .grip { margin-right: 4px; }
  .spin { display: flex; flex-direction: column; flex: none; gap: 6px; width: 16px; align-items: center; }
  .g4 .spin button { height: 4px; }
  .fmt { display: flex; font-size: 11px; }
  .fmt button { width: 16px; height: 16px; }
  .fmt .col { height: 15px; border-bottom: 3px solid #000; width: 12px; margin-left: 2px; line-height: 11px; }

  main { display: flex; flex: 1; min-height: 0; }
  .strip { flex: none; width: 24px; background: #d2d8ee; }
  .doc { width: 25px; height: 61px; padding-left: 2px; border: 1px solid #888; border-left: 0; border-radius: 0 6px 6px 0; background: #ebedf1; color: #8b0a2c; writing-mode: vertical-rl; transform: rotate(180deg); text-align: center; }
  .tree { display: flex; flex-direction: column; flex: none; width: 226px; border-left: 1px solid #909090; background: #ebedf1; }
  table { flex: none; width: 224px; border-collapse: separate; border-spacing: 0; table-layout: fixed; }
  th, td { height: 19px; width: 25px; padding: 0 0 0 2px; border-right: 1px solid #c4c4c8; border-bottom: 1px solid #c4c4c8; font-weight: normal; text-align: left; overflow: hidden; white-space: nowrap; }
  th { border-color: #ebedf1; background: #efeeeb; }
  .c1 { width: 129px; }
  th.c1 { padding-left: 3px; }
  td.c1 { padding: 0; }
  .c4 { width: 21px; padding-left: 1px; }
  .sel { background: #c1c1c1; }
  .node { display: flex; align-items: center; height: 18px; }
  .node .ic { margin: 0 11px 0 4px; }
  .d0 { padding-left: 1px; }
  .d1 { padding-left: 13px; }
  .d2 { padding-left: 25px; }
  .d3 { padding-left: 27px; }
  .node.d3 .ic { margin-right: 1px; }
  td input { appearance: none; display: block; width: 13px; height: 13px; margin: 0; border: 2px solid #333; background: #f5f6f8; }
  .lower { flex: 1; max-height: 435px; display: flex; align-items: flex-end; border-bottom: 1px solid #d0d0d4; }
  .cell { width: 129px; height: 20px; border: 1px solid #888; background: #fff; }
  .split { flex: none; position: relative; width: 5px; background: #0078d4; border-right: 1px solid #e4e6ea; }
  .split button { position: absolute; left: -1px; top: 0; width: 8px; height: 33px; display: grid; place-items: center; border: 1px solid #999; border-left: 0; border-radius: 0 6px 6px 0; background: #ebedf1; z-index: 1; }

  .editor { display: grid; grid-template-columns: 23px minmax(0, 1fr) 18px; grid-template-rows: 24px minmax(0, 1fr) 20px; flex: 1; min-width: 0; border-top: 1px solid #999; background: #efefef; border-right: 1px solid #888; }
  .hruler { display: flex; justify-content: center; overflow: hidden; }
  .hruler svg { overflow: visible; }
  .hruler text, .vruler text { font: 10px "Liberation Serif", serif; fill: #222; }
  .closebox { display: grid; place-items: center; background: #cfdbe4; }
  .vruler { overflow: hidden; }
  .canvas { display: flex; justify-content: center; overflow: hidden; background: #9d9ca2; }
  .page { width: 792px; flex: none; border: 1px solid #111; border-right-width: 2px; border-bottom: 0; background: #fff; }
  .page svg { margin-right: -1px; }
  .pno { font: 15px "Liberation Serif", serif; }
  .mno { font: italic 9px "Liberation Serif", serif; fill: #333; }
  .time { font: bold 19px "Liberation Serif", serif; }
  .vscroll { display: flex; flex-direction: column; background: #f0f0f0; }
  .vscroll button { display: grid; place-items: center; height: 17px; }
  .vtrack { flex: 1; }
  .vthumb { display: grid; place-items: center; height: 59%; margin: 0 2px; border: 1px solid #989898; border-radius: 2px; background: linear-gradient(90deg, #f6f6f6, #e2e2e4 50%, #c6c6ca 55%, #d8d8dc); }
  .vthumb i { width: 7px; height: 7px; background: repeating-linear-gradient(#666 0 1px, #fff 1px 3px); }
  .status { grid-column: 1 / -1; display: flex; align-items: center; padding-left: 5px; background: #f0efef; }
  .views { display: flex; }
  .views button { display: grid; place-items: center; width: 16px; height: 17px; }
  .views .on { background: #8ba3d8; border: 1px solid #4a6ab8; }
  .nav { display: flex; gap: 3px; }
  .views + .nav { margin-left: 1px; }
  .nav button { width: 14px; height: 15px; border: 1px solid #777; border-radius: 3px; background: #f4f4f4; }
  .nav path { fill: none; stroke: #33507c; stroke-width: 1.600; }
  .nav svg { margin: 0 -1px; }
  .pages { width: 25px; text-align: center; font-size: 12px; }
  .count { width: 16px; text-align: center; font-size: 12px; }
  .mode { width: 79px; padding-left: 16px; }
  .hscroll { display: flex; align-items: center; flex: 1; margin: 0 18px 0 2px; height: 17px; border-left: 1px solid #bbb; }
  .hscroll button { display: grid; place-items: center; width: 18px; height: 17px; }
  .hthumb { display: grid; place-items: center; flex: 1; height: 14px; border: 1px solid #989898; border-radius: 2px; background: linear-gradient(#f4f4f4, #e4e4e6 45%, #c8c8cc 55%, #d8d8dc); }
  .hthumb i { width: 8px; height: 7px; background: repeating-linear-gradient(90deg, #555 0 1px, #eee 1px 3px); }

  footer { position: relative; flex: none; border-top: 3px solid #0078d4; background: #ebedf1; border-right: 1px solid #888; }
  .pull { position: absolute; left: 2px; top: -7px; width: 32px; height: 8px; display: grid; place-items: center; border: 1px solid #aaa; border-bottom: 0; border-radius: 7px 7px 0 0; background: #ebedf1; }
  .palette { display: flex; height: 73px; padding: 2px 1px 0 3px; border-bottom: 1px solid #888; }
  .grid { display: grid; flex: none; grid-template-rows: 26px 26px; grid-auto-flow: column; grid-auto-columns: 24px; gap: 1px; height: 53px; }
  .pb { position: relative; flex: none; width: 24px; height: 26px; border: 1px solid #4a4a4a; border-radius: 2px; background: #ebedf1; overflow: hidden; }
  .pb svg { margin: -1px; }
  .pb.on { background: #8a97bd; border-color: #5068b0; }
  .key { position: absolute; right: 1px; top: 1px; font-size: 8px; line-height: 9px; color: #22304c; }
  .pb.midi { font-weight: bold; font-size: 10px; display: grid; place-items: center; }
  .pb.tall { height: 53px; }
  .w19 { width: 19px; margin-left: 1px; }
  .pb.w19 { width: 19px; }
  .pb.w28 { width: 28px; }
  .pb.w52 { width: 52px; }
  .pb.w20 { width: 20px; }
  .keyname { position: absolute; inset: auto 0 1px; font: italic bold 11px "Liberation Serif", serif; text-align: center; }
  .meter { font: bold 16px "Liberation Serif", serif; }
  .one, .two { flex: none; width: 12px; height: 53px; display: grid; align-items: center; }
  .two { grid-template-rows: 26px 26px; gap: 1px; width: 13px; }
  .arrow { display: grid; place-items: center; width: 12px; height: 26px; }
  .mid { width: 13px; justify-items: center; background: #e2e3e5; }
  .pspin .spin { gap: 1px; width: 12px; color: #4a66b8; }
  .pspin .spin button { display: grid; place-items: center; width: 10px; height: 12px; border: 1px solid #aab; }
  .drums { display: flex; flex: none; flex-direction: column; gap: 1px; width: 81px; margin-left: 1px; }
  .row { display: flex; gap: 1px; }
  .pb.crash { width: 68px; padding-bottom: 4px; font-size: 9px; white-space: nowrap; text-align: center; }
  .pclose { margin-left: auto; display: flex; flex-direction: column; gap: 3px; }
  .frame { position: absolute; left: 416px; top: -6px; width: 286px; height: 74px; border: 4px solid #fb0404; pointer-events: none; }
  .tabs { display: flex; height: 37px; border-bottom: 2px solid #4a5a68; background: #d2d8ee; margin-right: -1px; }
  .tab { display: grid; place-items: center; flex: none; width: 39px; border-right: 1px solid #9a9ca0; background: #ebedf1; }
  .tab.active { width: 41px; margin-top: -1px; }
  .revert { margin: auto 3px 0 auto; }

  .helper { position: absolute; left: 12px; top: 341px; display: flex; flex-direction: column; width: 329px; height: 284px; padding: 0 7px; border: 1px solid #000; box-shadow: 1px 1px #000; background: #ebedf1; }
  .helper header { display: flex; justify-content: space-between; align-items: center; height: 17px; border-bottom: 1px solid #000; }
  .helper h2 { margin: 0; font-size: 12px; color: #00007c; }
  .hb { display: flex; gap: 2px; margin-right: -4px; }
  .hb svg { fill: none; stroke: #7088a4; }
  .lessons { display: flex; flex-direction: column; flex: 1; padding-top: 5px; }
  .lessons p { margin: 0; line-height: 13px; color: #f01414; }
  .lessons a { font-weight: bold; font-size: 12px; line-height: 13px; color: #402000; text-decoration: none; }
  .helper label { display: flex; align-items: center; gap: 3px; height: 22px; padding: 0 0 0 3px; border-top: 1px solid #333; }
  .helper label input { appearance: none; width: 13px; height: 13px; margin: 0; border: 1px solid #888; background: #dfe1e5; box-shadow: inset 0 0 0 1px #f8f8f8; }
</style>
